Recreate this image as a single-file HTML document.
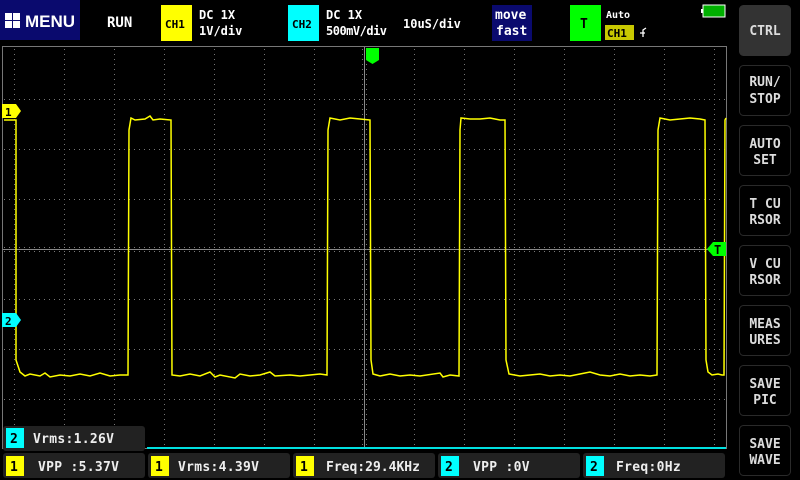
<!DOCTYPE html>
<html><head><meta charset="utf-8"><style>
body{margin:0;width:800px;height:480px;background:#000;overflow:hidden;font-family:"DejaVu Sans Mono","Liberation Mono",monospace;}
svg{display:block}
text{font-family:"DejaVu Sans Mono","Liberation Mono",monospace;font-weight:bold}
</style></head><body>
<svg width="800" height="480" viewBox="0 0 800 480" xmlns="http://www.w3.org/2000/svg">
<rect width="800" height="480" fill="#000"/>
<rect x="0" y="0" width="80" height="40" fill="#0a0a6e"/>
<g fill="#fff"><rect x="5" y="13" width="7" height="7"/><rect x="13" y="13" width="7" height="7"/><rect x="5" y="21" width="7" height="7"/><rect x="13" y="21" width="7" height="7"/></g>
<text x="25" y="27" fill="#fff" font-size="17" style="font-family:'Liberation Sans',sans-serif">MENU</text>
<text x="107" y="27" fill="#fff" font-size="14">RUN</text>
<rect x="161" y="5" width="31" height="36" fill="#ffff00"/>
<text x="165" y="28" fill="#000" font-size="11">CH1</text>
<text x="199" y="19" fill="#fff" font-size="12">DC  1X</text>
<text x="199" y="35" fill="#fff" font-size="12">1V/div</text>
<rect x="288" y="5" width="31" height="36" fill="#00ffff"/>
<text x="292" y="28" fill="#000" font-size="11">CH2</text>
<text x="326" y="19" fill="#fff" font-size="12">DC  1X</text>
<text x="326" y="35" fill="#fff" font-size="12" letter-spacing="-0.5">500mV/div</text>
<text x="403" y="28" fill="#fff" font-size="12">10uS/div</text>
<rect x="492" y="5" width="40" height="36" fill="#0a0a6e"/>
<text x="495" y="19" fill="#fff" font-size="13">move</text>
<text x="496" y="35" fill="#fff" font-size="13">fast</text>
<rect x="570" y="5" width="31" height="36" fill="#00ff00"/>
<text x="580" y="28" fill="#000" font-size="13" font-weight="normal">T</text>
<text x="606" y="18" fill="#fff" font-size="10">Auto</text>
<rect x="605" y="25" width="29" height="15" fill="#c8c800"/>
<text x="607" y="37" fill="#000" font-size="11">CH1</text>
<path d="M643 37 L643 30 L646 28 M640 33 L645 33" stroke="#fff" stroke-width="1.3" fill="none"/>
<rect x="703" y="5" width="22" height="12" fill="#00b000" stroke="#fff" stroke-width="1"/>
<rect x="701" y="9" width="2" height="4" fill="#fff"/>
<g font-size="13" fill="#ddd" text-anchor="middle">
<rect x="739.5" y="5.5" width="51" height="50" rx="4" fill="#333" stroke="#333"/>
<text x="765" y="35" font-weight="normal">CTRL</text>
<rect x="739.5" y="65.5" width="51" height="50" rx="4" fill="#000" stroke="#2a2a2a"/>
<text x="765" y="86">RUN/</text><text x="765" y="103">STOP</text>
<rect x="739.5" y="125.5" width="51" height="50" rx="4" fill="#000" stroke="#2a2a2a"/>
<text x="765" y="148">AUTO</text><text x="765" y="164">SET</text>
<rect x="739.5" y="185.5" width="51" height="50" rx="4" fill="#000" stroke="#2a2a2a"/>
<text x="765" y="208">T CU</text><text x="765" y="224">RSOR</text>
<rect x="739.5" y="245.5" width="51" height="50" rx="4" fill="#000" stroke="#2a2a2a"/>
<text x="765" y="268">V CU</text><text x="765" y="284">RSOR</text>
<rect x="739.5" y="305.5" width="51" height="50" rx="4" fill="#000" stroke="#2a2a2a"/>
<text x="765" y="328">MEAS</text><text x="765" y="344">URES</text>
<rect x="739.5" y="365.5" width="51" height="50" rx="4" fill="#000" stroke="#2a2a2a"/>
<text x="765" y="388">SAVE</text><text x="765" y="404">PIC</text>
<rect x="739.5" y="425.5" width="51" height="50" rx="4" fill="#000" stroke="#2a2a2a"/>
<text x="765" y="448">SAVE</text><text x="765" y="464">WAVE</text>
</g>
<rect x="2.5" y="46.5" width="724" height="402" fill="none" stroke="#777" stroke-width="1"/>
<g stroke="#777" stroke-width="1" stroke-dasharray="1,4">
<path d="M14.5 49V448M64.5 49V448M114.5 49V448M164.5 49V448M214.5 49V448M264.5 49V448M314.5 49V448M414.5 49V448M464.5 49V448M514.5 49V448M564.5 49V448M614.5 49V448M664.5 49V448M714.5 49V448"/>
<path d="M4 99.5H726M4 149.5H726M4 199.5H726M4 299.5H726M4 349.5H726M4 399.5H726"/>
</g>
<path d="M3 249.5H726M364.5 47V448" stroke="#888" stroke-width="1"/>
<g stroke="#777" stroke-width="1" stroke-dasharray="1,4">
<path d="M4 247.5H726M4 251.5H726" stroke-dasharray="1,4" stroke-dashoffset="0"/>
<path d="M362.5 49V448M366.5 49V448"/>
</g>
<path d="M4 120H16V360L20 372L25 376L30 374L40 376L45 373L50 377L60 375L70 376L80 374L90 376L100 373L110 376L120 375L128 375L129 130L131 118L135 120L145 119L150 116L153 120L160 119L171 120L172 375L180 376L190 374L200 376L210 372L215 377L220 375L235 378L240 374L250 376L260 375L270 372L275 376L290 375L300 376L310 375L320 374L327 375L328 130L330 118L340 120L350 118L360 119L370 120L371 360L373 374L380 376L390 374L400 376L410 375L420 376L440 373L443 377L450 375L459 376L460 130L461 118L470 119L480 119L490 118L500 120L505 120L506 360L509 374L520 376L530 375L540 374L550 376L560 375L570 376L580 374L590 372L600 375L610 376L620 374L630 376L640 375L650 376L657 375L658 130L660 118L670 120L680 119L690 118L700 119L705 120L706 360L708 372L712 375L718 374L722 375L724 375L725 120L726 118" fill="none" stroke="#ffff00" stroke-width="1.5"/>
<path d="M366 48H379V60L372.5 64L366 60Z" fill="#00ff00"/>
<path d="M2 104H16L21 111L16 118H2Z" fill="#ffff00"/>
<text x="5" y="116" fill="#000" font-size="11">1</text>
<path d="M2 313H16L21 320L16 327H2Z" fill="#00ffff"/>
<text x="5" y="325" fill="#000" font-size="11">2</text>
<path d="M726 242H713L707 249L713 256H726Z" fill="#00ff00"/>
<text x="714" y="254" fill="#000" font-size="12">T</text>
<line x1="147" y1="448" x2="726" y2="448" stroke="#00e0e0" stroke-width="2"/>
<g font-size="13" fill="#eee" font-weight="normal">
<rect x="3" y="426" width="142" height="25" rx="3" fill="#222"/>
<rect x="6" y="428" width="18" height="20" fill="#00ffff"/><text x="10" y="443" fill="#000">2</text>
<text x="33" y="443" letter-spacing="0.3">Vrms:1.26V</text>
<rect x="3" y="453" width="142" height="25" rx="3" fill="#222"/>
<rect x="6" y="456" width="18" height="20" fill="#ffff00"/><text x="10" y="471" fill="#000">1</text>
<text x="38" y="471" letter-spacing="0.3">VPP :5.37V</text>
<rect x="148" y="453" width="142" height="25" rx="3" fill="#222"/>
<rect x="151" y="456" width="18" height="20" fill="#ffff00"/><text x="155" y="471" fill="#000">1</text>
<text x="178" y="471" letter-spacing="0.3">Vrms:4.39V</text>
<rect x="293" y="453" width="142" height="25" rx="3" fill="#222"/>
<rect x="296" y="456" width="18" height="20" fill="#ffff00"/><text x="300" y="471" fill="#000">1</text>
<text x="326" y="471">Freq:29.4KHz</text>
<rect x="438" y="453" width="142" height="25" rx="3" fill="#222"/>
<rect x="441" y="456" width="18" height="20" fill="#00ffff"/><text x="445" y="471" fill="#000">2</text>
<text x="473" y="471" letter-spacing="0.3">VPP :0V</text>
<rect x="583" y="453" width="142" height="25" rx="3" fill="#222"/>
<rect x="586" y="456" width="18" height="20" fill="#00ffff"/><text x="590" y="471" fill="#000">2</text>
<text x="616" y="471" letter-spacing="0.3">Freq:0Hz</text>
</g>
</svg>
</body></html>
